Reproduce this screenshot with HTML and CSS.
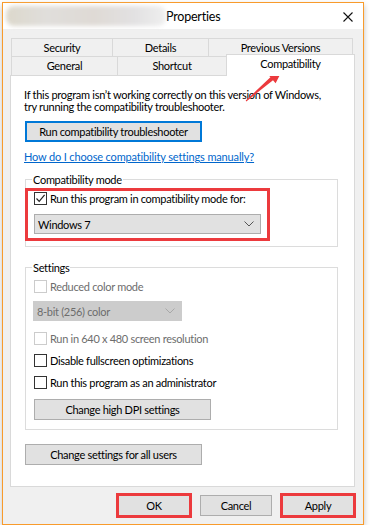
FILE: index.html
```html
<!DOCTYPE html>
<html lang="en">
<head>
    <meta charset="UTF-8">
    <title>Properties</title>
    <link rel="stylesheet" href="styles.css">
</head>
<body>
    <div class="window">
        <div class="titlebar">
            <div class="title-blur"></div>
            <span class="title">Properties</span>
            <svg class="close" width="10" height="10" viewBox="0 0 10 10">
                <path d="M0.5 0.5 L9.5 9.5 M9.5 0.5 L0.5 9.5" stroke="#111" stroke-width="1.1" fill="none"/>
            </svg>
        </div>

        <div class="body">
            <div class="tabs">
                <div class="tab-row">
                    <div class="tab t-security">Security</div>
                    <div class="tab t-details">Details</div>
                    <div class="tab t-previous">Previous Versions</div>
                </div>
                <div class="tab-row">
                    <div class="tab t-general">General</div>
                    <div class="tab t-shortcut">Shortcut</div>
                    <div class="tab t-compat active">Compatibility</div>
                </div>
            </div>

            <div class="pane">
                <p class="intro">If this program isn’t working correctly on this version of Windows,<br>try running the compatibility troubleshooter.</p>
                <button class="btn btn-wide focused">Run compatibility troubleshooter</button>
                <a class="link" href="#">How do I choose compatibility settings manually?</a>

                <fieldset class="group group-compat">
                    <legend>Compatibility mode</legend>
                    <label class="check">
                        <span class="box checked">
                            <svg width="11" height="11" viewBox="0 0 11 11">
                                <path d="M1.5 5.5 L4.2 8.3 L9.6 1.8" stroke="#222" stroke-width="1.2" fill="none"/>
                            </svg>
                        </span>
                        Run this program in compatibility mode for:
                    </label>
                    <div class="select select-os">
                        <span>Windows 7</span>
                        <svg width="10" height="6" viewBox="0 0 10 6">
                            <path d="M0.5 0.5 L5 5 L9.5 0.5" stroke="#555" stroke-width="1" fill="none"/>
                        </svg>
                    </div>
                </fieldset>

                <fieldset class="group group-settings">
                    <legend>Settings</legend>
                    <label class="check disabled"><span class="box"></span>Reduced color mode</label>
                    <div class="select select-color disabled">
                        <span>8-bit (256) color</span>
                        <svg width="10" height="6" viewBox="0 0 10 6">
                            <path d="M0.5 0.5 L5 5 L9.5 0.5" stroke="#a8a8a8" stroke-width="1" fill="none"/>
                        </svg>
                    </div>
                    <label class="check disabled res"><span class="box"></span>Run in 640 x 480 screen resolution</label>
                    <label class="check"><span class="box"></span>Disable fullscreen optimizations</label>
                    <label class="check"><span class="box"></span>Run this program as an administrator</label>
                    <button class="btn btn-wide btn-dpi">Change high DPI settings</button>
                </fieldset>

                <button class="btn btn-wide btn-users">Change settings for all users</button>
            </div>

            <div class="footer">
                <button class="btn btn-dialog marked">OK</button>
                <button class="btn btn-dialog">Cancel</button>
                <button class="btn btn-dialog marked">Apply</button>
            </div>
        </div>

        <!-- annotation overlays -->
        <div class="mark mark-compat"></div>
        <svg class="arrow" width="40" height="36" viewBox="244 68 40 36">
            <polygon points="246.3,101.4 273,80.3 275.6,83.3 283,69 267.8,74.3 270.4,77.3 245.7,100.6" fill="#ec3a3d"/>
        </svg>
    </div>
</body>
</html>
```

FILE: styles.css
```css
* {
    box-sizing: border-box;
}

body {
    margin: 0;
    background-color: #fff;
    font-family: Lato, sans-serif;
    font-size: 11px;
    letter-spacing: -0.3px;
    color: #000;
}

.window {
    position: relative;
    width: 362px;
    height: 523px;
    margin: 2px 0 0 2px;
    border: 1px solid #f89b2c;
    background-color: #f0f0f0;
    box-shadow: 0 3px 6px rgba(0, 0, 0, 0.25);
    display: flex;
    flex-direction: column;
}

.titlebar {
    height: 26px;
    background-color: #fff;
    display: flex;
    align-items: center;
    flex-shrink: 0;
}

.title-blur {
    width: 160px;
    height: 20px;
    margin-left: 3px;
    background: linear-gradient(90deg, #dcd8cc 0%, #e0dedb 25%, #dfdad5 55%, #e2e1e2 80%, #efefef 100%);
    filter: blur(2px);
    border-radius: 8px;
}

.title {
    font-size: 12.5px;
    letter-spacing: -0.2px;
    flex: 1;
}

.close {
    margin-right: 10px;
    margin-top: 1px;
}

.body {
    flex: 1;
    padding: 9px 8px 0 7px;
    display: flex;
    flex-direction: column;
}

/* tabs */
.tabs {
    padding-left: 1px;
}

.tab-row {
    display: flex;
    height: 18px;
}

.tab-row + .tab-row {
    height: 19px;
}

.tab {
    border: 1px solid #d9d9d9;
    border-bottom: none;
    margin-right: -1px;
    background-color: #f0f0f0;
    text-align: center;
    line-height: 17px;
}

.tab-row + .tab-row .tab {
    line-height: 18px;
}

.t-security { width: 102px; }
.t-details { width: 97px; }
.t-previous { width: 145px; }
.t-general { width: 107px; }
.t-shortcut { width: 110px; }

.tab.active {
    width: 129px;
    background-color: #fff;
    margin-top: -2px;
    height: 22px;
    line-height: 17px;
    position: relative;
    z-index: 1;
}

.pane {
    height: 412px;
    background-color: #fff;
    border: 1px solid #d9d9d9;
    padding: 13px 13px 0 13px;
}

.intro {
    margin: 0;
    line-height: 12px;
    letter-spacing: -0.28px;
}

.btn {
    font-family: inherit;
    font-size: 11px;
    letter-spacing: -0.3px;
    color: #000;
    background-color: #e1e1e1;
    border: 1px solid #adadad;
    padding: 0;
    height: 21px;
    display: block;
}

.btn-wide {
    width: 177px;
}

.focused {
    border: 2px solid #0078d7;
    margin: 8px 0 0 1px;
}

.link {
    display: block;
    color: #0066cc;
    margin-top: 8px;
    line-height: 13px;
    letter-spacing: -0.15px;
    width: max-content;
}

/* group boxes */
.group {
    border: 1px solid #dcdcdc;
    margin: 10px 0 0 1px;
    width: 313px;
    padding: 0 8px 0 8px;
    min-width: 0;
}

.group legend {
    padding: 0 1px;
    margin-left: -2px;
    line-height: 13px;
}

.group-compat {
    height: 74px;
    padding-top: 6px;
}

.group-settings {
    margin-top: 14px;
    height: 169px;
    padding-top: 6px;
}

.check {
    display: flex;
    align-items: center;
    height: 13px;
    line-height: 13px;
}

.box {
    width: 13px;
    height: 13px;
    border: 1px solid #333;
    background-color: #fff;
    margin-right: 3px;
    display: flex;
    align-items: center;
    justify-content: center;
    flex-shrink: 0;
}

.check.disabled {
    color: #6d6d6d;
}

.check.disabled .box {
    border-color: #cccccc;
}

.check + .check {
    margin-top: 9px;
}

.check.res {
    margin-top: 11px;
}

.select {
    display: flex;
    align-items: center;
    justify-content: space-between;
    height: 20px;
    border: 1px solid #adadad;
    background-color: #e1e1e1;
    padding: 0 6px 0 3px;
}

.select-os {
    width: 227px;
    margin-top: 9px;
}

.select-color {
    width: 149px;
    margin: 8px 0 0 -1px;
    background-color: #cccccc;
    border-color: #cccccc;
    color: #6d6d6d;
}

.btn-dpi {
    margin-top: 10px;
}

.btn-users {
    margin-top: 14px;
    margin-left: 1px;
}

/* footer buttons */
.footer {
    display: flex;
    justify-content: flex-end;
    gap: 10px;
    padding: 8px 1px 0 0;
}

.btn-dialog {
    width: 72px;
    height: 21px;
}

.marked {
    outline: 3px solid #ec3a3d;
    outline-offset: -1px;
}

.mark {
    position: absolute;
    border: 3px solid #ec3a3d;
}

.mark-compat {
    left: 22px;
    top: 185px;
    width: 245px;
    height: 53px;
}

.arrow {
    position: absolute;
    left: 241px;
    top: 65px;
}
```
